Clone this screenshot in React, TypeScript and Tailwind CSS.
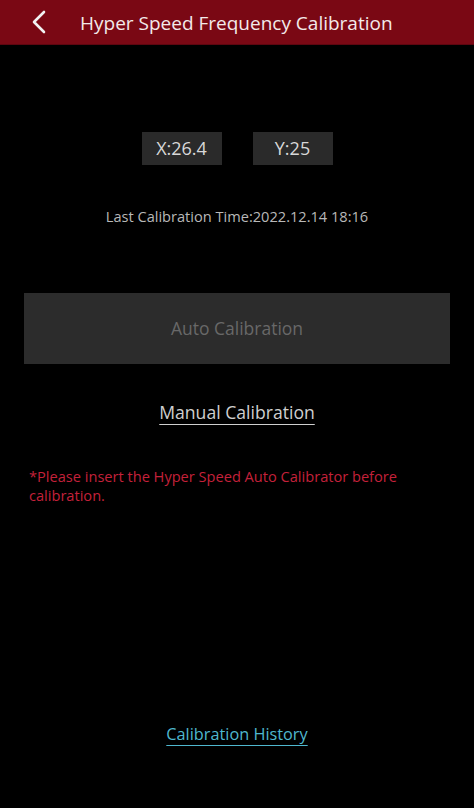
import React from 'react';

const font = { fontFamily: '"Open Sans", "Noto Sans", sans-serif' };

const Header: React.FC = () => (
  <header className="flex h-[45px] items-center bg-[#7a0814] border-b border-[#5e0610]">
    <button className="ml-[30px] flex h-[24px] w-[18px] items-center justify-center">
      <svg width="16" height="24" viewBox="0 0 16 24" fill="none">
        <path d="M13 2 L3 12 L13 22" stroke="#f2f2f2" strokeWidth="2.6" strokeLinecap="round" strokeLinejoin="round" />
      </svg>
    </button>
    <h1 className="ml-[32px] mt-[2px] text-[19px] leading-none text-[#f3eaea]">Hyper Speed Frequency Calibration</h1>
  </header>
);

const CoordBox: React.FC<{ children: React.ReactNode }> = ({ children }) => (
  <div className="flex h-[33px] w-[80px] items-center justify-center bg-[#2a2a2a] text-[18px] text-[#d8d8d8]">
    {children}
  </div>
);

export default function App() {
  return (
    <div style={font} className="flex min-h-[808px] w-[474px] flex-col bg-black">
      <Header />
      <main className="flex flex-1 flex-col">
        <div className="mt-[87px] flex justify-center gap-[31px]">
          <CoordBox>X:26.4</CoordBox>
          <CoordBox>Y:25</CoordBox>
        </div>
        <p className="mt-[41px] text-center text-[14.6px] leading-[20px] text-[#b8b8b8]">
          Last Calibration Time:2022.12.14 18:16
        </p>
        <button className="mx-[24px] mt-[67px] flex h-[71px] items-center justify-center bg-[#2c2c2c] text-[17.5px] text-[#686868]">
          Auto Calibration
        </button>
        <div className="mt-[36px] text-center">
          <a className="text-[17.6px] leading-[24px] text-[#cfcfcf] underline decoration-1 underline-offset-[5px]">Manual Calibration</a>
        </div>
        <p className="mt-[42px] px-[29px] text-[14.6px] leading-[19px] text-[#c4213a]">
          *Please insert the Hyper Speed Auto Calibrator before calibration.
        </p>
        <div className="mt-auto mb-[62px] text-center">
          <a className="text-[16.3px] leading-[24px] text-[#4fb8cf] underline decoration-1 underline-offset-[5px]">Calibration History</a>
        </div>
      </main>
    </div>
  );
}
